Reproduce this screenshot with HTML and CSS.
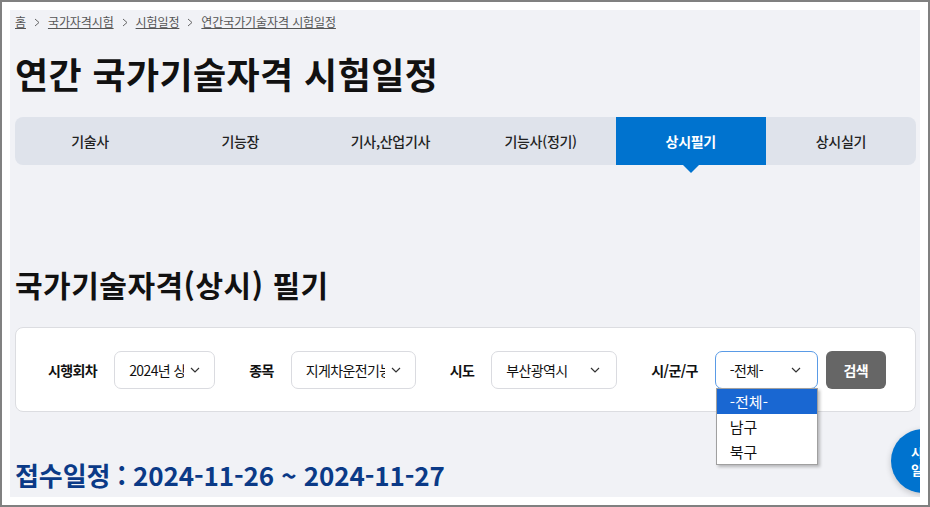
FILE: index.html
```html
<!DOCTYPE html>
<html lang="ko">
<head>
  <meta charset="UTF-8">
  <meta name="viewport" content="width=device-width, initial-scale=1.0">
  <title>연간 국가기술자격 시험일정</title>
  <link rel="stylesheet" href="styles.css">
</head>
<body>
  <div class="frame">
    <div class="page">
      <nav class="breadcrumb">
        <a href="#">홈</a>
        <svg class="sep" width="6" height="9" viewBox="0 0 6 9"><path d="M1 1l4 3.5L1 8" fill="none" stroke="#666" stroke-width="1"/></svg>
        <a href="#">국가자격시험</a>
        <svg class="sep" width="6" height="9" viewBox="0 0 6 9"><path d="M1 1l4 3.5L1 8" fill="none" stroke="#666" stroke-width="1"/></svg>
        <a href="#">시험일정</a>
        <svg class="sep" width="6" height="9" viewBox="0 0 6 9"><path d="M1 1l4 3.5L1 8" fill="none" stroke="#666" stroke-width="1"/></svg>
        <a href="#">연간국가기술자격 시험일정</a>
      </nav>

      <h1 class="page-title">연간 국가기술자격 시험일정</h1>

      <ul class="tabs">
        <li class="tab">기술사</li>
        <li class="tab">기능장</li>
        <li class="tab">기사,산업기사</li>
        <li class="tab">기능사(정기)</li>
        <li class="tab active">상시필기</li>
        <li class="tab">상시실기</li>
      </ul>

      <h2 class="section-title">국가기술자격(상시) 필기</h2>

      <div class="search-box">
        <div class="field">
          <label>시행회차</label>
          <div class="select w-round">
            <span class="value">2024년 상시</span>
            <svg class="chev" width="10" height="6" viewBox="0 0 10 6"><path d="M1 1l4 4 4-4" fill="none" stroke="#333" stroke-width="1.2"/></svg>
          </div>
        </div>
        <div class="field">
          <label>종목</label>
          <div class="select w-item">
            <span class="value">지게차운전기능사</span>
            <svg class="chev" width="10" height="6" viewBox="0 0 10 6"><path d="M1 1l4 4 4-4" fill="none" stroke="#333" stroke-width="1.2"/></svg>
          </div>
        </div>
        <div class="field">
          <label>시도</label>
          <div class="select w-sido">
            <span class="value">부산광역시</span>
            <svg class="chev" width="10" height="6" viewBox="0 0 10 6"><path d="M1 1l4 4 4-4" fill="none" stroke="#333" stroke-width="1.2"/></svg>
          </div>
        </div>
        <div class="field">
          <label>시/군/구</label>
          <div class="select w-gu focus">
            <span class="value">-전체-</span>
            <svg class="chev" width="10" height="6" viewBox="0 0 10 6"><path d="M1 1l4 4 4-4" fill="none" stroke="#333" stroke-width="1.2"/></svg>
            <ul class="options">
              <li class="selected">-전체-</li>
              <li>남구</li>
              <li>북구</li>
            </ul>
          </div>
          <button class="btn-search">검색</button>
        </div>
      </div>

      <p class="receipt">접수일정 : 2024-11-26 ~ 2024-11-27</p>

      <a href="#" class="float-btn">시험<br>일정</a>
    </div>
  </div>
</body>
</html>
```

FILE: styles.css
```css
* {
  box-sizing: border-box;
}

body {
  margin: 0;
  font-family: "Noto Sans CJK KR", "Noto Sans", sans-serif;
  color: #111;
}

.frame {
  width: 930px;
  height: 507px;
  border: 2px solid #808080;
  padding: 8px;
  background: #fff;
}

.page {
  position: relative;
  height: 100%;
  overflow: hidden;
  background: #f1f2f6;
  padding: 3px 4px 0 5px;
}

/* breadcrumb */
.breadcrumb {
  display: flex;
  align-items: center;
  gap: 9px;
  font-size: 12px;
  line-height: 18px;
  letter-spacing: -0.1px;
}

.breadcrumb a {
  color: #555;
  text-decoration: underline;
}

.breadcrumb .sep {
  margin: 0 -1px;
}

.page-title {
  margin: 20px 0 0;
  font-size: 36px;
  line-height: 44px;
  font-weight: 700;
  letter-spacing: 0.4px;
}

/* tabs */
.tabs {
  display: flex;
  list-style: none;
  margin: 22px 0 0;
  padding: 0;
  height: 48px;
  background: #dfe3eb;
  border-radius: 8px;
}

.tab {
  position: relative;
  flex: 1;
  display: flex;
  align-items: center;
  justify-content: center;
  font-size: 14px;
  font-weight: 500;
  letter-spacing: -0.3px;
  color: #222;
}

.tab.active {
  background: #0073cf;
  color: #fff;
  font-weight: 700;
}

.tab.active::after {
  content: "";
  position: absolute;
  left: 50%;
  bottom: -8px;
  margin-left: -8px;
  border-left: 8px solid transparent;
  border-right: 8px solid transparent;
  border-top: 8px solid #0073cf;
}

.section-title {
  margin: 100px 0 0;
  font-size: 30px;
  line-height: 38px;
  font-weight: 700;
  letter-spacing: 0.5px;
}

/* search box */
.search-box {
  display: flex;
  align-items: center;
  gap: 34px;
  margin-top: 24px;
  height: 85px;
  padding-left: 32px;
  background: #fff;
  border: 1px solid #dcdde1;
  border-radius: 8px;
}

.field {
  display: flex;
  align-items: center;
  gap: 17px;
}

.field label {
  font-size: 14px;
  font-weight: 700;
  letter-spacing: -0.6px;
}

.select {
  position: relative;
  display: flex;
  align-items: center;
  height: 38px;
  padding: 0 14px;
  background: #fff;
  border: 1px solid #dadbe0;
  border-radius: 7px;
  font-size: 14px;
  letter-spacing: -0.6px;
}

.select .value {
  flex: 1;
  overflow: hidden;
  white-space: nowrap;
}

.select .chev {
  flex: none;
  margin-left: 6px;
}

.w-round { width: 101px; }
.w-item { width: 125px; }
.w-sido { width: 126px; }
.w-gu { width: 103px; }

.w-sido .chev,
.w-gu .chev {
  margin-right: 2px;
}

.select.focus {
  border-color: #5a9be6;
}

.options {
  position: absolute;
  top: 36px;
  left: 0;
  width: 102px;
  margin: 0;
  padding: 0;
  list-style: none;
  background: #fff;
  border: 1px solid #a0a0a0;
  box-shadow: 2px 2px 3px rgba(0, 0, 0, 0.25);
  z-index: 5;
}

.options li {
  height: 25px;
  line-height: 25px;
  padding-left: 13px;
  font-size: 15px;
  letter-spacing: 0;
}

.options li.selected {
  background: #1967d2;
  color: #fff;
}

.btn-search {
  margin-left: -9px;
  width: 60px;
  height: 38px;
  border: 0;
  border-radius: 6px;
  background: #666;
  color: #fff;
  font-family: inherit;
  font-size: 14px;
  font-weight: 700;
  letter-spacing: -0.6px;
}

.receipt {
  margin: 46px 0 0;
  font-size: 26px;
  line-height: 34px;
  font-weight: 700;
  color: #0b3a87;
  letter-spacing: -0.1px;
}

.float-btn {
  position: absolute;
  right: -35px;
  bottom: 4px;
  width: 64px;
  height: 64px;
  border-radius: 50%;
  background: #0073cf;
  box-shadow: 0 2px 6px rgba(0, 0, 0, 0.2);
  display: flex;
  align-items: center;
  justify-content: center;
  text-align: center;
  color: #fff;
  font-size: 13px;
  font-weight: 700;
  line-height: 18px;
  text-decoration: none;
}
```
